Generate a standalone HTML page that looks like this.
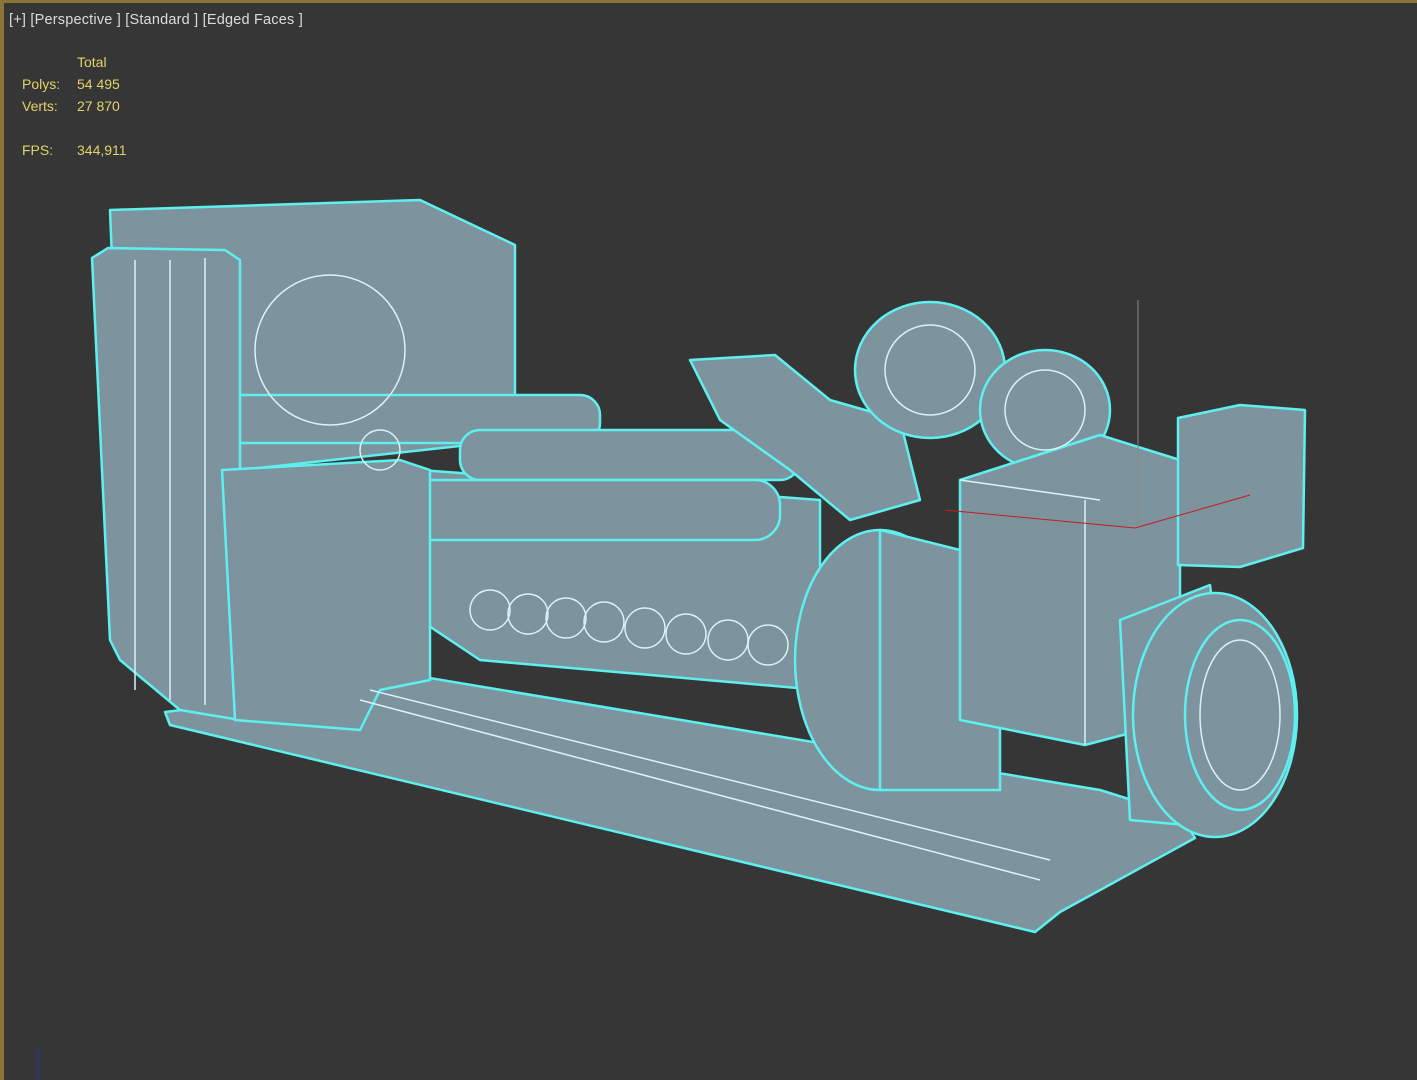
<!DOCTYPE html>
<html><head><style>
html,body{margin:0;padding:0;background:#363636;}
#v{position:relative;width:1417px;height:1080px;overflow:hidden;background:#363636;}
#v:before{content:"";position:absolute;left:0;top:0;width:1417px;height:3px;background:#8a7538;}
#v:after{content:"";position:absolute;left:0;top:0;width:4px;height:1080px;background:#8a7538;}
.t{position:absolute;font-family:"Liberation Sans",sans-serif;font-size:14px;}
.y{color:#e2d36a;}
.w{color:#dcdcdc;}
svg{position:absolute;left:0;top:0;}
</style></head><body><div id="v">
<div class="t w" style="left:9px;top:12px;font-size:14.5px;letter-spacing:0.2px;word-spacing:0px">[+] [Perspective ] [Standard ] [Edged Faces ]</div>
<div class="t y" style="left:77px;top:54px">Total</div>
<div class="t y" style="left:22px;top:76px">Polys:</div><div class="t y" style="left:77px;top:76px">54 495</div>
<div class="t y" style="left:22px;top:98px">Verts:</div><div class="t y" style="left:77px;top:98px">27 870</div>
<div class="t y" style="left:22px;top:142px">FPS:</div><div class="t y" style="left:77px;top:142px">344,911</div>
<svg width="1417" height="1080" viewBox="0 0 1417 1080">
<g fill="#7d939d" stroke="#5ef0f0" stroke-width="2.5" stroke-linejoin="round">
<polygon points="165,712 170,725 1035,932 1060,912 1195,838 1180,815 1100,790 370,668 350,690"/>
<polygon points="110,210 420,200 515,245 515,440 240,470 120,460"/>
<polygon points="420,470 820,500 820,690 480,660 420,620"/>
<rect x="130" y="395" width="470" height="48" rx="20"/>
<rect x="460" y="430" width="340" height="50" rx="20"/>
<rect x="400" y="480" width="380" height="60" rx="25"/>
<path d="M690,360 L775,355 L830,400 L900,420 L920,500 L850,520 L790,470 L720,420 Z"/>
<ellipse cx="930" cy="370" rx="75" ry="68"/>
<ellipse cx="1045" cy="410" rx="65" ry="60"/>
<ellipse cx="880" cy="660" rx="85" ry="130"/>
<polygon points="880,530 1000,560 1000,790 880,790"/>
<polygon points="960,480 1100,435 1180,460 1180,720 1085,745 960,720"/>
<polygon points="1120,620 1210,585 1240,830 1130,820"/>
<ellipse cx="1215" cy="715" rx="82" ry="122"/>
<ellipse cx="1240" cy="715" rx="55" ry="95" fill="#7d939d"/>
<polygon points="1178,418 1240,405 1305,410 1303,548 1240,567 1178,565"/>
<polygon points="92,258 108,248 225,250 240,260 240,720 180,710 120,660 110,640"/>
<polygon points="222,470 400,460 430,470 430,680 380,690 360,730 235,720"/>
</g>
<g fill="none" stroke="#d8f4f6" stroke-width="1.5">
<line x1="135" y1="260" x2="135" y2="690"/><line x1="170" y1="260" x2="170" y2="700"/><line x1="205" y1="258" x2="205" y2="705"/>
<line x1="370" y1="690" x2="1050" y2="860"/><line x1="360" y1="700" x2="1040" y2="880"/>
<circle cx="490" cy="610" r="20"/><circle cx="528" cy="614" r="20"/><circle cx="566" cy="618" r="20"/><circle cx="604" cy="622" r="20"/><circle cx="645" cy="628" r="20"/><circle cx="686" cy="634" r="20"/><circle cx="728" cy="640" r="20"/><circle cx="768" cy="645" r="20"/>
<circle cx="330" cy="350" r="75"/>
<circle cx="380" cy="450" r="20"/>
<ellipse cx="930" cy="370" rx="45" ry="45"/><ellipse cx="1045" cy="410" rx="40" ry="40"/>
<ellipse cx="1240" cy="715" rx="40" ry="75"/>
<line x1="1085" y1="500" x2="1085" y2="745"/>
<line x1="960" y1="480" x2="1100" y2="500"/>
</g>
<g stroke-width="1" fill="none">
<line x1="1138" y1="300" x2="1138" y2="525" stroke="#888"/>
<line x1="945" y1="510" x2="1135" y2="528" stroke="#c02020"/>
<line x1="1135" y1="528" x2="1250" y2="495" stroke="#c02020"/>
<line x1="38" y1="1048" x2="38" y2="1080" stroke="#2030c0"/>
</g>
</svg>
</div></body></html>
